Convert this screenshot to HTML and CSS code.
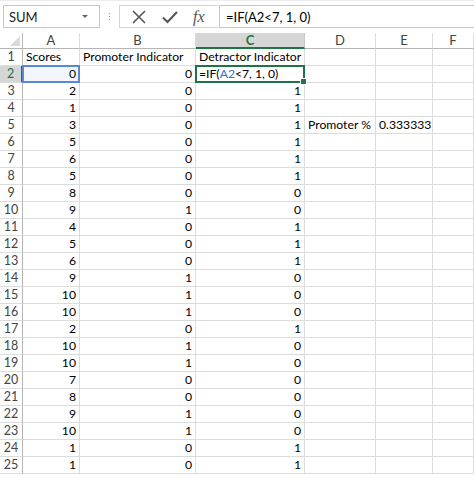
FILE: index.html
```html
<!DOCTYPE html>
<html>
<head>
<meta charset="utf-8">
<link rel="stylesheet" href="styles.css">
</head>
<body>
<div class="toolbar">
  <div class="namebox"><span>SUM</span><span class="caret"></span></div>
  <div class="grip"><i></i><i></i><i></i></div>
  <div class="fbtns">
    <svg class="ico" width="16" height="16" viewBox="0 0 16 16"><path d="M2 2 L14 14 M14 2 L2 14" stroke="#555" stroke-width="1.6" fill="none"/></svg>
    <svg class="ico" width="18" height="16" viewBox="0 0 18 16"><path d="M2 8.5 L6.5 13 L16 3" stroke="#555" stroke-width="2" fill="none"/></svg>
    <span class="fx">fx</span>
  </div>
  <div class="fbar">=IF(A2&lt;7, 1, 0)</div>
</div>
<div class="sheet">
  <div class="ch corner"><span class="tri"></span></div>
  <div class="ch">A</div><div class="ch">B</div><div class="ch sel">C</div><div class="ch">D</div><div class="ch">E</div><div class="ch">F</div>

  <div class="rh">1</div><div class="c">Scores</div><div class="c">Promoter Indicator</div><div class="c">Detractor Indicator</div><div class="c"></div><div class="c"></div><div class="c"></div>
  <div class="rh rsel">2</div><div class="c n ref">0</div><div class="c n">0</div><div class="c act">=IF(<span class="blue">A2</span>&lt;7, 1, 0)</div><div class="c"></div><div class="c"></div><div class="c"></div>
  <div class="rh">3</div><div class="c n">2</div><div class="c n">0</div><div class="c n">1</div><div class="c"></div><div class="c"></div><div class="c"></div>
  <div class="rh">4</div><div class="c n">1</div><div class="c n">0</div><div class="c n">1</div><div class="c"></div><div class="c"></div><div class="c"></div>
  <div class="rh">5</div><div class="c n">3</div><div class="c n">0</div><div class="c n">1</div><div class="c">Promoter %</div><div class="c n">0.333333</div><div class="c"></div>
  <div class="rh">6</div><div class="c n">5</div><div class="c n">0</div><div class="c n">1</div><div class="c"></div><div class="c"></div><div class="c"></div>
  <div class="rh">7</div><div class="c n">6</div><div class="c n">0</div><div class="c n">1</div><div class="c"></div><div class="c"></div><div class="c"></div>
  <div class="rh">8</div><div class="c n">5</div><div class="c n">0</div><div class="c n">1</div><div class="c"></div><div class="c"></div><div class="c"></div>
  <div class="rh">9</div><div class="c n">8</div><div class="c n">0</div><div class="c n">0</div><div class="c"></div><div class="c"></div><div class="c"></div>
  <div class="rh">10</div><div class="c n">9</div><div class="c n">1</div><div class="c n">0</div><div class="c"></div><div class="c"></div><div class="c"></div>
  <div class="rh">11</div><div class="c n">4</div><div class="c n">0</div><div class="c n">1</div><div class="c"></div><div class="c"></div><div class="c"></div>
  <div class="rh">12</div><div class="c n">5</div><div class="c n">0</div><div class="c n">1</div><div class="c"></div><div class="c"></div><div class="c"></div>
  <div class="rh">13</div><div class="c n">6</div><div class="c n">0</div><div class="c n">1</div><div class="c"></div><div class="c"></div><div class="c"></div>
  <div class="rh">14</div><div class="c n">9</div><div class="c n">1</div><div class="c n">0</div><div class="c"></div><div class="c"></div><div class="c"></div>
  <div class="rh">15</div><div class="c n">10</div><div class="c n">1</div><div class="c n">0</div><div class="c"></div><div class="c"></div><div class="c"></div>
  <div class="rh">16</div><div class="c n">10</div><div class="c n">1</div><div class="c n">0</div><div class="c"></div><div class="c"></div><div class="c"></div>
  <div class="rh">17</div><div class="c n">2</div><div class="c n">0</div><div class="c n">1</div><div class="c"></div><div class="c"></div><div class="c"></div>
  <div class="rh">18</div><div class="c n">10</div><div class="c n">1</div><div class="c n">0</div><div class="c"></div><div class="c"></div><div class="c"></div>
  <div class="rh">19</div><div class="c n">10</div><div class="c n">1</div><div class="c n">0</div><div class="c"></div><div class="c"></div><div class="c"></div>
  <div class="rh">20</div><div class="c n">7</div><div class="c n">0</div><div class="c n">0</div><div class="c"></div><div class="c"></div><div class="c"></div>
  <div class="rh">21</div><div class="c n">8</div><div class="c n">0</div><div class="c n">0</div><div class="c"></div><div class="c"></div><div class="c"></div>
  <div class="rh">22</div><div class="c n">9</div><div class="c n">1</div><div class="c n">0</div><div class="c"></div><div class="c"></div><div class="c"></div>
  <div class="rh">23</div><div class="c n">10</div><div class="c n">1</div><div class="c n">0</div><div class="c"></div><div class="c"></div><div class="c"></div>
  <div class="rh">24</div><div class="c n">1</div><div class="c n">0</div><div class="c n">1</div><div class="c"></div><div class="c"></div><div class="c"></div>
  <div class="rh">25</div><div class="c n">1</div><div class="c n">0</div><div class="c n">1</div><div class="c"></div><div class="c"></div><div class="c"></div>
</div>
</body>
</html>
```
FILE: styles.css
```css
* { box-sizing: border-box; }
html, body { margin: 0; padding: 0; background: #fff; }
body {
  width: 474px;
  height: 478px;
  overflow: hidden;
  font-family: Lato, "Liberation Sans", sans-serif;
  font-size: 12px;
  color: #000;
}
.toolbar {
  height: 33px;
  display: flex;
  align-items: flex-start;
  padding-top: 4px;
  padding-left: 3px;
  border-top: 1px solid #ececec;
}
.namebox {
  width: 97px;
  height: 23px;
  border: 1px solid #c6c6c6;
  display: flex;
  align-items: center;
  justify-content: space-between;
  padding: 0 11px 0 5px;
  font-size: 13px;
  color: #222;
}
.caret {
  width: 0; height: 0;
  border-left: 3px solid transparent;
  border-right: 3px solid transparent;
  border-top: 3px solid #666;
}
.grip {
  width: 19px;
  height: 23px;
  display: flex;
  flex-direction: column;
  align-items: center;
  justify-content: center;
  gap: 2px;
}
.grip i { display: block; width: 1px; height: 1px; background: #999; }
.fbtns {
  width: 99px;
  height: 23px;
  border: 1px solid #d4d4d4;
  border-right: none;
  display: flex;
  align-items: center;
  padding-left: 11px;
  gap: 14px;
}
.ico { display: block; }
.fx {
  font-family: "Liberation Serif", serif;
  font-style: italic;
  font-size: 16px;
  color: #555;
}
.fbar {
  flex: 1;
  height: 23px;
  border: 1px solid #c6c6c6;
  border-right: none;
  margin-left: 1px;
  padding-left: 6px;
  display: flex;
  align-items: center;
  font-size: 13px;
  color: #000;
}
.sheet {
  display: grid;
  grid-template-columns: 23px 57px 116px 109px 71px 57px 41px;
  grid-template-rows: 16px repeat(25, 17px);
}
.ch {
  border-right: 1px solid #dcdcdc;
  border-bottom: 1px solid #b5b5b5;
  text-align: center;
  color: #444;
  line-height: 15px;
  font-size: 13px;
}
.ch.corner { position: relative; border-right: 1px solid #b5b5b5; }
.tri {
  position: absolute;
  right: 2px; bottom: 2px;
  width: 0; height: 0;
  border-left: 10px solid transparent;
  border-bottom: 10px solid #dadada;
}
.ch.sel {
  background: #d6d6d6;
  color: #217346;
  font-weight: bold;
  border-bottom: 2px solid #217346;
  border-right-color: #c6c6c6;
}
.rh {
  border-right: 1px solid #b5b5b5;
  border-bottom: 1px solid #dcdcdc;
  text-align: center;
  color: #444;
  line-height: 16px;
  font-size: 12.5px;
}
.rh.rsel {
  background: #d6d6d6;
  color: #217346;
  border-right: 2px solid #217346;
}
.c {
  border-right: 1px solid #dcdcdc;
  border-bottom: 1px solid #dcdcdc;
  line-height: 16px;
  padding: 0 3px;
  white-space: nowrap;
  overflow: visible;
  font-size: 12.2px;
}
.c.n { text-align: right; }
.blue { color: #3b6ed2; }
.ref { position: relative; }
.ref::after {
  content: "";
  position: absolute;
  left: -1px; top: -1px; right: -1px; bottom: -1px;
  border: 2px solid #5b87d8;
  background: rgba(91, 135, 216, 0.08);
}
.act { position: relative; padding-left: 3px; }
.act::after {
  content: "";
  position: absolute;
  left: -1px; top: -1px; right: -1px; bottom: -1px;
  border: 2px solid #217346;
}
.act::before {
  content: "";
  position: absolute;
  right: -3px; bottom: -3px;
  width: 5px; height: 5px;
  background: #217346;
  border: 1px solid #fff;
  z-index: 2;
}
```
